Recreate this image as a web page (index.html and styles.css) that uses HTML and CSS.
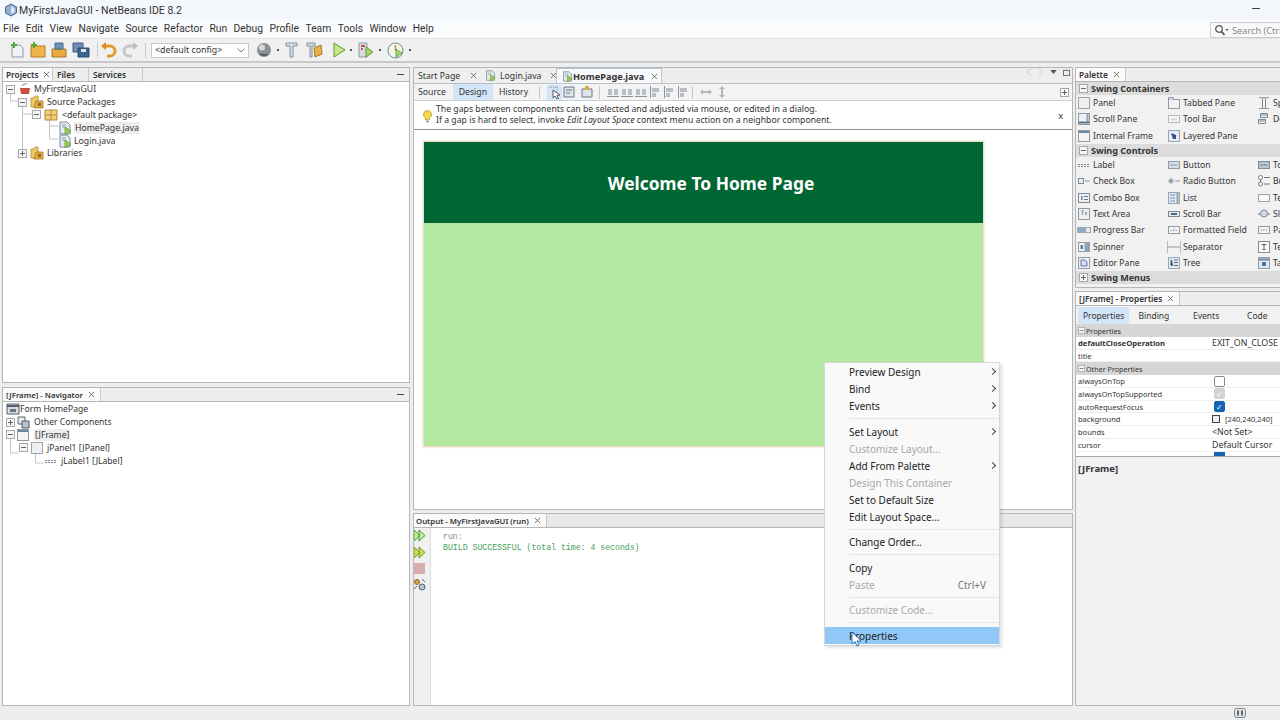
FILE: index.html
```html
<!DOCTYPE html>
<html>
<head>
  <meta charset="utf-8">
  <title>MyFirstJavaGUI - NetBeans IDE 8.2</title>
  <link rel="stylesheet" href="styles.css">
</head>
<body>
  <svg class="defs" width="0" height="0">
    <symbol id="java" viewBox="0 0 14 14">
      <path d="M2 1h7l3 3v9H2z" fill="#e4ebf0" stroke="#7b8b98"/>
      <path d="M4 4h4M4 6h3" stroke="#8fa3b2"/>
      <path d="M7 6l6 4-6 4z" fill="#9ccc50" stroke="#5f9428" stroke-width=".7"/>
    </symbol>
    <symbol id="folder" viewBox="0 0 14 14">
      <path d="M1 3h3l1-2h3v11H1z" fill="#f0c868" stroke="#b58a30" stroke-width=".8"/>
      <path d="M6 6h7v7H4z" fill="#e2a93c" stroke="#a8782a" stroke-width=".8"/>
      <path d="M8 8h3v3H8z" fill="#8a6a3c"/>
    </symbol>
    <symbol id="plus" viewBox="0 0 9 9">
      <rect x=".5" y=".5" width="8" height="8" fill="#f6f6f6" stroke="#a8a8a8"/>
      <path d="M2 4.500h5M4.500 2v5" stroke="#666"/>
    </symbol>
    <symbol id="minus" viewBox="0 0 9 9">
      <rect x=".5" y=".5" width="8" height="8" fill="#f6f6f6" stroke="#a8a8a8"/>
      <path d="M2 4.500h5" stroke="#666"/>
    </symbol>
    <symbol id="close" viewBox="0 0 8 8">
      <path d="M1 1l6 6M7 1L1 7" stroke="#555" stroke-width=".9" fill="none"/>
    </symbol>
    <symbol id="align-b" viewBox="0 0 12 12">
      <path d="M1 3h4v6H1zM7 3h4v6H7z" fill="#b9bec4"/>
      <path d="M0 10.500h12" stroke="#8d9299"/>
    </symbol>
    <symbol id="align-l" viewBox="0 0 12 12">
      <path d="M3 2h7v4H3zM3 7h4v4H3z" fill="#b9bec4"/>
      <path d="M1.500 0v12" stroke="#8d9299"/>
    </symbol>
    <symbol id="box" viewBox="0 0 14 14">
      <rect x="1" y="1" width="12" height="12" fill="#f0f0f0" stroke="#8f9aa6"/>
      <path d="M1 4h12" stroke="#b6c2cf"/>
      <path d="M3 6h8v5H3z" fill="#dfe7ef"/>
    </symbol>
    <symbol id="p-panel" viewBox="0 0 14 14"><rect x="1.500" y="1.500" width="11" height="11" fill="#efefef" stroke="#9aa4ae"/></symbol>
    <symbol id="p-tab" viewBox="0 0 14 14"><rect x="1.500" y="3.500" width="11" height="9" fill="#f2f2f2" stroke="#8f9aa6"/><path d="M1.500 3.500v-2h5v2" fill="#dfe7ef" stroke="#8f9aa6"/></symbol>
    <symbol id="p-split" viewBox="0 0 14 14"><path d="M2 1.500h10M2 12.500h10" stroke="#8f9aa6"/><path d="M5.500 2v10M8.500 2v10" stroke="#7c8b98"/></symbol>
    <symbol id="p-scroll" viewBox="0 0 14 14"><rect x="1.500" y="1.500" width="11" height="11" fill="#f2f2f2" stroke="#8f9aa6"/><path d="M2 10.500h10" stroke="#5e7286" stroke-width="2"/><path d="M10.500 2v8" stroke="#8fa3b5" stroke-width="2"/></symbol>
    <symbol id="p-tool" viewBox="0 0 14 14"><rect x="1.500" y="3.500" width="11" height="7" fill="#f6f6f6" stroke="#b2bac2"/><path d="M4 6.500h6v2H4z" fill="#cdd6de"/></symbol>
    <symbol id="p-desk" viewBox="0 0 14 14"><path d="M3.500 1.500h7v4h-7zM1.500 7.500h7v4h-7z" fill="#f4f4f4" stroke="#7c8b98"/><path d="M3.500 3h7M1.500 9h7" stroke="#7c8b98"/></symbol>
    <symbol id="p-int" viewBox="0 0 14 14"><rect x="1.500" y="1.500" width="11" height="11" fill="#f4f4f4" stroke="#8f9aa6"/><path d="M2 3h10" stroke="#6d87a3" stroke-width="2"/></symbol>
    <symbol id="p-layer" viewBox="0 0 14 14"><rect x="1.500" y="1.500" width="11" height="11" fill="#e6ecf3" stroke="#9aa4ae"/><path d="M4 4l5 2v4H6z" fill="#3a4a94"/></symbol>
    <symbol id="p-label" viewBox="0 0 14 14"><path d="M1 6.500h12M1 8.500h12" stroke="#808890" stroke-dasharray="2 1"/></symbol>
    <symbol id="p-btn" viewBox="0 0 14 14"><rect x="1.500" y="3.500" width="11" height="7" fill="#d8dfe6" stroke="#8f9aa6"/><path d="M3.500 7h7" stroke="#6f7a85" stroke-dasharray="2 1"/></symbol>
    <symbol id="p-toggle" viewBox="0 0 14 14"><rect x="1.500" y="3.500" width="11" height="7" fill="#b9c7d3" stroke="#7c8b98"/><path d="M3.500 7h7" stroke="#5c6670" stroke-dasharray="2 1"/></symbol>
    <symbol id="p-check" viewBox="0 0 14 14"><rect x="1.500" y="4.500" width="5" height="5" fill="#eee" stroke="#7c8b98"/><path d="M8 7h5" stroke="#8f9aa6"/></symbol>
    <symbol id="p-radio" viewBox="0 0 14 14"><circle cx="4" cy="7" r="2.300" fill="#8f9aa6" stroke="#c0c6cc"/><path d="M8 7h5" stroke="#8f9aa6"/></symbol>
    <symbol id="p-group" viewBox="0 0 14 14"><circle cx="3.500" cy="3.500" r="2" fill="#fff" stroke="#6f7a85"/><circle cx="3.500" cy="10" r="2" fill="#fff" stroke="#6f7a85"/><path d="M3.500 5.500v2.500M7 3.500h6M7 10h6" stroke="#6f7a85"/></symbol>
    <symbol id="p-combo" viewBox="0 0 14 14"><rect x="1.500" y="2.500" width="11" height="9" fill="#eef2f6" stroke="#7c8b98"/><path d="M4 5h1.500v4H4z" fill="#6d87a3"/><path d="M7 5.500h4M7 8.500h4" stroke="#5c7996"/></symbol>
    <symbol id="p-list" viewBox="0 0 14 14"><rect x="1.500" y="1.500" width="11" height="11" fill="#dfe8f0" stroke="#9aa9b6"/><path d="M3 4h5M3 7h5M3 10h5" stroke="#8098ad"/><path d="M10.500 2v10" stroke="#8fa3b5" stroke-width="2"/></symbol>
    <symbol id="p-field" viewBox="0 0 14 14"><rect x="1.500" y="3.500" width="11" height="7" fill="#f8f8f8" stroke="#9aa4ae"/></symbol>
    <symbol id="p-area" viewBox="0 0 14 14"><rect x="1.500" y="1.500" width="11" height="11" fill="#eeeeee" stroke="#8f9aa6"/><path d="M4 4h3M5.500 4v4M8 5l2 3M10 5L8 8" stroke="#7c8b98" stroke-width=".8"/></symbol>
    <symbol id="p-sbar" viewBox="0 0 14 14"><rect x="1.500" y="4.500" width="11" height="5" fill="#e4ebf2" stroke="#7c8b98"/><path d="M4 7h6" stroke="#4f6b88" stroke-width="2"/></symbol>
    <symbol id="p-slider" viewBox="0 0 14 14"><path d="M1 7h12" stroke="#a4aeb8" stroke-width="2"/><circle cx="7" cy="6.500" r="3.500" fill="#d3dce5" stroke="#7c8b98"/></symbol>
    <symbol id="p-progress" viewBox="0 0 14 14"><rect x=".5" y="4.500" width="13" height="5" fill="#e6eaee" stroke="#9aa9b6"/><path d="M1 7h8" stroke="#8fa8c2" stroke-width="4"/></symbol>
    <symbol id="p-format" viewBox="0 0 14 14"><rect x="1.500" y="3.500" width="11" height="7" fill="#f4f4f4" stroke="#8f9aa6"/><path d="M3.500 7.500h1.500M6 8.500l1.500-3M8.500 7.500H10" stroke="#7c8b98" stroke-width=".8"/></symbol>
    <symbol id="p-pass" viewBox="0 0 14 14"><rect x="1.500" y="3.500" width="11" height="7" fill="#f4f4f4" stroke="#8f9aa6"/><path d="M3.500 7h7" stroke="#7c8b98" stroke-dasharray="1.500 1"/></symbol>
    <symbol id="p-spin" viewBox="0 0 14 14"><rect x="1.500" y="2.500" width="11" height="9" fill="#f4f4f4" stroke="#8f9aa6"/><path d="M7.500 3h4.500v8H7.500z" fill="#8fa3b5"/><path d="M3.500 5h2.500v4H3.500z" fill="#5c7996"/></symbol>
    <symbol id="p-sep" viewBox="0 0 14 14"><path d="M.5 1v12M13.500 1v12" stroke="#b2bac2"/><path d="M.5 7h13" stroke="#8f9aa6"/></symbol>
    <symbol id="p-tpane" viewBox="0 0 14 14"><rect x="1.500" y="1.500" width="11" height="11" fill="#f8f8f8" stroke="#7c8b98"/><path d="M4.500 4.500h5M7 4.500v5M5.500 9.500h3" stroke="#56626c"/></symbol>
    <symbol id="p-edit" viewBox="0 0 14 14"><rect x="1.500" y="1.500" width="11" height="11" fill="#eef0f4" stroke="#8f9aa6"/><path d="M4 4h4l2 2v4H4z" fill="#d8dcf0" stroke="#4a5aa0" stroke-width=".8"/></symbol>
    <symbol id="p-tree" viewBox="0 0 14 14"><rect x="1.500" y="1.500" width="11" height="11" fill="#e2eaf1" stroke="#9aa9b6"/><path d="M4 3.500v6h2M4 6h2M7 4h4M7 6.500h4M7 9.500h4" stroke="#5e7286"/></symbol>
    <symbol id="p-table" viewBox="0 0 14 14"><rect x="1.500" y="1.500" width="11" height="11" fill="#dde7f0" stroke="#8f9aa6"/><path d="M2 3.500h10" stroke="#6d87a3" stroke-width="2"/><path d="M5 6h4v4H5z" fill="#4f75a0"/></symbol>
  </svg>

  <div class="titlebar">
    <svg class="title-logo" width="14" height="14" viewBox="0 0 14 14">
      <path d="M7 1l5.500 3v6L7 13l-5.500-3V4z" fill="#8fb0d0" stroke="#46688c"/>
      <path d="M7 3l3.500 2v4L7 11z" fill="#dfe9f3"/>
    </svg>
    <span class="title-text">MyFirstJavaGUI - NetBeans IDE 8.2</span>
    <span class="minimize"></span>
  </div>

  <div class="menubar">
    <nav class="menus">
      <span>File</span><span>Edit</span><span>View</span><span>Navigate</span><span>Source</span><span>Refactor</span><span>Run</span><span>Debug</span><span>Profile</span><span>Team</span><span>Tools</span><span>Window</span><span>Help</span>
    </nav>
    <div class="search">
      <svg width="15" height="12" viewBox="0 0 15 12">
        <circle cx="5" cy="5" r="3.300" fill="#fff" stroke="#555" stroke-width="1.300"/>
        <path d="M7.500 7.500l3 3.500" stroke="#444" stroke-width="1.600"/>
        <path d="M11.500 5h3l-1.500 2z" fill="#444"/>
      </svg>
      <span>Search (Ctrl+I)</span>
    </div>
  </div>

  <div class="toolbar">
    <svg class="tool" width="16" height="16" viewBox="0 0 16 16"><path d="M3 3h8l3 3v9H3z" fill="#eef3f7" stroke="#8a98a5"/><path d="M5 0v6M2 3h6" stroke="#4ea83c" stroke-width="2"/></svg>
    <svg class="tool" width="16" height="16" viewBox="0 0 16 16"><path d="M1 4h14v11H1z" fill="#efb548" stroke="#b07c22"/><path d="M4 0v6M1 3h6" stroke="#4ea83c" stroke-width="2"/></svg>
    <svg class="tool" width="16" height="16" viewBox="0 0 16 16"><path d="M1 7h14v8H1z" fill="#e9a93e" stroke="#a8782a"/><path d="M4 1h8v6H4z" fill="#6c8fb5" stroke="#466a90"/></svg>
    <svg class="tool" width="18" height="16" viewBox="0 0 18 16"><path d="M1 1h10v9H1z" fill="#6d8fb3" stroke="#3e5f82"/><path d="M6 6h11v9H6z" fill="#3f648c" stroke="#2d4a6b"/><path d="M9 7h5v3H9z" fill="#d9e4ee"/></svg>
    <i class="tool-sep"></i>
    <svg class="tool" width="16" height="16" viewBox="0 0 16 16"><path d="M3 4h6a5 5 0 0 1 0 10H6" fill="none" stroke="#e09a2c" stroke-width="3"/><path d="M5 0L0 4l5 4z" fill="#d88a20"/></svg>
    <svg class="tool" width="16" height="16" viewBox="0 0 16 16"><path d="M13 4H7a5 5 0 0 0 0 10h3" fill="none" stroke="#c2c8cc" stroke-width="3"/><path d="M11 0l5 4-5 4z" fill="#b9bfc4"/></svg>
    <i class="tool-sep"></i>
    <div class="config"><span>&lt;default config&gt;</span><svg width="8" height="5" viewBox="0 0 8 5"><path d="M.5.500L4 4 7.500.500" fill="none" stroke="#777"/></svg></div>
    <svg class="tool globe" width="16" height="16" viewBox="0 0 16 16"><circle cx="8" cy="8" r="7" fill="#8b8f92"/><circle cx="6" cy="5.500" r="3" fill="#d8dadc"/><path d="M3 12a7 7 0 0 0 10 0z" fill="#55595c"/></svg>
    <i class="tool-dot"></i>
    <svg class="tool" width="13" height="16" viewBox="0 0 13 16"><path d="M1 1h11v3H8v11H5V4H1z" fill="#d6dde2" stroke="#84929c"/></svg>
    <svg class="tool clean" width="17" height="16" viewBox="0 0 17 16"><path d="M1 1h8v3H6v11H4V4H1z" fill="#d6dde2" stroke="#84929c"/><path d="M8 6l7-3 1 9-7 3z" fill="#e8b04a" stroke="#a8782a"/></svg>
    <svg class="tool run" width="13" height="16" viewBox="0 0 13 16"><path d="M1 1l11 7-11 7z" fill="#c8e58e" stroke="#5c9c2a"/></svg>
    <i class="tool-dot"></i>
    <svg class="tool" width="16" height="16" viewBox="0 0 16 16"><path d="M1 1h8v14H1z" fill="#d8dfe4" stroke="#8d9aa4"/><path d="M3 4h4M3 7h2" stroke="#c8574a" stroke-width="2"/><path d="M8 5l7 5-7 5z" fill="#a8d66e" stroke="#5c9c2a"/></svg>
    <i class="tool-dot"></i>
    <svg class="tool" width="17" height="17" viewBox="0 0 17 17"><circle cx="8.500" cy="8.500" r="7.500" fill="#f2f5f0" stroke="#6c8c7c"/><path d="M8.500 3v6" stroke="#d08a30" stroke-width="1.500"/><path d="M9 7l6 4-6 4z" fill="#a8d66e" stroke="#5c9c2a" stroke-width=".8"/></svg>
    <i class="tool-dot"></i>
  </div>

  <div class="workspace">
    <div class="col-left">
      <section class="panel projects">
        <header class="tabs">
          <span class="tab active">Projects <svg class="x"><use href="#close"/></svg></span>
          <span class="tab">Files</span>
          <span class="tab">Services</span>
          <span class="panel-min"></span>
        </header>
        <div class="tree-wrap">
          <svg class="tree-lines" width="80" height="80"><path d="M7.500 10v9h8M19.500 24v47h-4M19.500 32h10M46.500 37v20h9M46.500 44h9" fill="none" stroke="#c4c4c4"/></svg>
          <ul class="tree">
            <li class="lv0"><svg class="exp"><use href="#minus"/></svg><svg class="ico" viewBox="0 0 14 14"><path d="M2 6h10l-1 6H3z" fill="#c8503c"/><path d="M4 4c1-3 4-1 5-3" fill="none" stroke="#8a6a50"/></svg>MyFirstJavaGUI</li>
            <li class="lv1"><svg class="exp"><use href="#minus"/></svg><svg class="ico"><use href="#folder"/></svg>Source Packages</li>
            <li class="lv2"><svg class="exp"><use href="#minus"/></svg><svg class="ico" viewBox="0 0 14 14"><path d="M1 2h12v10H1z" fill="#f3d27c" stroke="#b58a30"/><path d="M7 2v10M1 7h12" stroke="#b58a30"/></svg>&lt;default package&gt;</li>
            <li class="lv3"><svg class="ico"><use href="#java"/></svg><span class="selected">HomePage.java</span></li>
            <li class="lv3"><svg class="ico"><use href="#java"/></svg>Login.java</li>
            <li class="lv1"><svg class="exp"><use href="#plus"/></svg><svg class="ico"><use href="#folder"/></svg>Libraries</li>
          </ul>
        </div>
      </section>
      <section class="panel navigator">
        <header class="tabs">
          <span class="tab active">[JFrame] - Navigator <svg class="x"><use href="#close"/></svg></span>
          <span class="panel-min"></span>
        </header>
        <div class="tree-wrap">
          <svg class="tree-lines" width="80" height="80"><path d="M7.500 36v15h8M32.500 48v13h8" fill="none" stroke="#c4c4c4"/></svg>
          <ul class="tree">
            <li class="nav0"><svg class="ico" viewBox="0 0 14 14"><path d="M1 2h12v10H1z" fill="#d8dce0" stroke="#55606a"/><path d="M1 4h12" stroke="#55606a" stroke-width="2"/><path d="M4 7h6v3H4z" fill="#6b7782"/></svg>Form HomePage</li>
            <li class="nav0b"><svg class="exp"><use href="#plus"/></svg><svg class="ico" viewBox="0 0 14 14"><path d="M2 2h7v7H2z" fill="#e8ecef" stroke="#5c6670"/><path d="M6 6h7v7H6z" fill="#b8c6d2" stroke="#4c5862"/></svg>Other Components</li>
            <li class="nav0b"><svg class="exp"><use href="#minus"/></svg><svg class="ico"><use href="#p-int"/></svg><span class="selected">[JFrame]</span></li>
            <li class="nav1"><svg class="exp"><use href="#minus"/></svg><svg class="ico"><use href="#p-panel"/></svg>jPanel1 [JPanel]</li>
            <li class="nav2"><svg class="ico"><use href="#p-label"/></svg>jLabel1 [JLabel]</li>
          </ul>
        </div>
      </section>
    </div>

    <div class="col-center">
      <section class="panel editor">
        <header class="editor-tabs">
          <span class="etab">Start Page <svg class="x"><use href="#close"/></svg></span>
          <span class="etab"><svg class="ico"><use href="#java"/></svg>Login.java <svg class="x"><use href="#close"/></svg></span>
          <span class="etab current"><svg class="ico"><use href="#java"/></svg>HomePage.java <svg class="x"><use href="#close"/></svg></span>
          <span class="etab-controls">
            <svg width="6" height="8" viewBox="0 0 6 8"><path d="M5 .500L1 4l4 3.500" fill="none" stroke="#c4c8cc"/></svg>
            <svg width="6" height="8" viewBox="0 0 6 8"><path d="M1 .500L5 4 1 7.500" fill="none" stroke="#c4c8cc"/></svg>
            <svg width="7" height="4" viewBox="0 0 8 5"><path d="M0 0h8L4 5z" fill="#555"/></svg>
            <svg width="7" height="7" viewBox="0 0 8 8"><path d="M.5 1.500h7v6h-7z" fill="none" stroke="#555"/></svg>
          </span>
        </header>
        <div class="design-bar">
          <span class="view">Source</span>
          <span class="view active">Design</span>
          <span class="view">History</span>
          <i class="bar-sep"></i>
          <span class="pick"><svg width="13" height="13" viewBox="0 0 13 13"><path d="M1 1h8v6" fill="none" stroke="#7b8793" stroke-dasharray="1 1"/><path d="M5 4l7 5-3 .5 1.500 3-1.500.5L7 10l-2 2z" fill="#fff" stroke="#556"/></svg></span>
          <svg class="dbi" width="12" height="12" viewBox="0 0 12 12"><path d="M1 1h10v10H1z" fill="#dfe5ea" stroke="#6c7883"/><path d="M3 4h6M3 7h4" stroke="#6c7883"/></svg>
          <svg class="dbi wide" width="12" height="12" viewBox="0 0 12 12"><path d="M1 3h10v8H1z" fill="#dfe5ea" stroke="#6c7883"/><path d="M4 0h4v4H4z" fill="#e0a83c"/></svg>
          <i class="bar-sep"></i>
          <svg class="al"><use href="#align-b"/></svg><svg class="al"><use href="#align-b"/></svg><svg class="al"><use href="#align-b"/></svg><svg class="al"><use href="#align-l"/></svg><svg class="al"><use href="#align-l"/></svg><svg class="al"><use href="#align-l"/></svg>
          <i class="bar-sep near"></i>
          <svg class="dbi" width="12" height="10" viewBox="0 0 12 10"><path d="M0 5l3-3v6zM12 5L9 2v6zM3 4h6v2H3z" fill="#b4b9be"/></svg>
          <svg class="dbi up" width="8" height="12" viewBox="0 0 8 12"><path d="M4 0l3 3H1zM4 12l3-3H1zM3 3h2v6H3z" fill="#b4b9be"/></svg>
          <svg class="grow-icon" width="9" height="9"><use href="#plus"/></svg>
        </div>
        <div class="hint">
          <svg class="bulb" width="9" height="13" viewBox="0 0 9 13"><path d="M4.500.500a4 4 0 0 1 2 7.500v2h-4V8a4 4 0 0 1 2-7.500z" fill="#f3d84e" stroke="#a89030" stroke-width=".7"/><path d="M3 11h3l-1 1.500H4z" fill="#777"/></svg>
          <p>The gaps between components can be selected and adjusted via mouse, or edited in a dialog.<br>If a gap is hard to select, invoke <em>Edit Layout Space</em> context menu action on a neighbor component.</p>
          <span class="hint-x">x</span>
        </div>
        <div class="canvas">
          <div class="form">
            <div class="form-head">Welcome To Home Page</div>
            <div class="form-body"></div>
          </div>
        </div>
      </section>
      <section class="panel output">
        <header class="tabs">
          <span class="tab active">Output - MyFirstJavaGUI (run) <svg class="x"><use href="#close"/></svg></span>
        </header>
        <div class="output-body">
          <div class="output-tools">
            <svg width="13" height="13" viewBox="0 0 13 13"><path d="M1 1l6 5.500L1 12zM6 1l6 5.500L6 12z" fill="#c4f0a0" stroke="#3f9a2c"/></svg>
            <svg width="13" height="13" viewBox="0 0 13 13"><path d="M1 1l6 5.500L1 12zM6 1l6 5.500L6 12z" fill="#c8e04a" stroke="#6f9a2c"/></svg>
            <svg width="11" height="11" viewBox="0 0 11 11"><rect width="11" height="11" fill="#d8aeb0"/></svg>
            <svg width="13" height="13" viewBox="0 0 13 13"><circle cx="4" cy="4" r="2.500" fill="#d9a050" stroke="#8a6a3c"/><circle cx="9" cy="9" r="3" fill="#b8c4ce" stroke="#56626c"/><path d="M1 11l3-3M9 1l3 3" stroke="#56626c"/></svg>
          </div>
          <pre class="log"><span class="log-run">run:</span>
<span class="log-ok">BUILD SUCCESSFUL (total time: 4 seconds)</span></pre>
        </div>
      </section>
    </div>

    <div class="col-right">
      <section class="panel palette">
        <header class="tabs">
          <span class="tab active">Palette <svg class="x"><use href="#close"/></svg></span>
        </header>
        <div class="pal-head"><svg class="exp"><use href="#minus"/></svg>Swing Containers</div>
        <div class="pal-grid">
          <span><svg class="ico"><use href="#p-panel"/></svg>Panel</span><span><svg class="ico"><use href="#p-tab"/></svg>Tabbed Pane</span><span><svg class="ico"><use href="#p-split"/></svg>Split Pane</span>
          <span><svg class="ico"><use href="#p-scroll"/></svg>Scroll Pane</span><span><svg class="ico"><use href="#p-tool"/></svg>Tool Bar</span><span><svg class="ico"><use href="#p-desk"/></svg>Desktop Pane</span>
          <span><svg class="ico"><use href="#p-int"/></svg>Internal Frame</span><span><svg class="ico"><use href="#p-layer"/></svg>Layered Pane</span><span></span>
        </div>
        <div class="pal-head"><svg class="exp"><use href="#minus"/></svg>Swing Controls</div>
        <div class="pal-grid">
          <span><svg class="ico"><use href="#p-label"/></svg>Label</span><span><svg class="ico"><use href="#p-btn"/></svg>Button</span><span><svg class="ico"><use href="#p-toggle"/></svg>Toggle Button</span>
          <span><svg class="ico"><use href="#p-check"/></svg>Check Box</span><span><svg class="ico"><use href="#p-radio"/></svg>Radio Button</span><span><svg class="ico"><use href="#p-group"/></svg>Button Group</span>
          <span><svg class="ico"><use href="#p-combo"/></svg>Combo Box</span><span><svg class="ico"><use href="#p-list"/></svg>List</span><span><svg class="ico"><use href="#p-field"/></svg>Text Field</span>
          <span><svg class="ico"><use href="#p-area"/></svg>Text Area</span><span><svg class="ico"><use href="#p-sbar"/></svg>Scroll Bar</span><span><svg class="ico"><use href="#p-slider"/></svg>Slider</span>
          <span><svg class="ico"><use href="#p-progress"/></svg>Progress Bar</span><span><svg class="ico"><use href="#p-format"/></svg>Formatted Field</span><span><svg class="ico"><use href="#p-pass"/></svg>Password Field</span>
          <span><svg class="ico"><use href="#p-spin"/></svg>Spinner</span><span><svg class="ico"><use href="#p-sep"/></svg>Separator</span><span><svg class="ico"><use href="#p-tpane"/></svg>Text Pane</span>
          <span><svg class="ico"><use href="#p-edit"/></svg>Editor Pane</span><span><svg class="ico"><use href="#p-tree"/></svg>Tree</span><span><svg class="ico"><use href="#p-table"/></svg>Table</span>
        </div>
        <div class="pal-head"><svg class="exp"><use href="#plus"/></svg>Swing Menus</div>
      </section>
      <section class="panel props">
        <header class="tabs">
          <span class="tab active">[JFrame] - Properties <svg class="x"><use href="#close"/></svg></span>
        </header>
        <div class="prop-tabs">
          <span class="ptab active">Properties</span>
          <span class="ptab">Binding</span>
          <span class="ptab">Events</span>
          <span class="ptab">Code</span>
        </div>
        <div class="prop-table">
          <div class="prop-sec"><svg class="exp"><use href="#minus"/></svg>Properties</div>
          <div class="prop-row"><b>defaultCloseOperation</b><span class="val">EXIT_ON_CLOSE</span></div>
          <div class="prop-row"><span>title</span><span class="val"></span></div>
          <div class="prop-sec"><svg class="exp"><use href="#minus"/></svg>Other Properties</div>
          <div class="prop-row"><span>alwaysOnTop</span><span class="val"><i class="check"></i></span></div>
          <div class="prop-row"><span>alwaysOnTopSupported</span><span class="val"><i class="check off">&#10003;</i></span></div>
          <div class="prop-row"><span>autoRequestFocus</span><span class="val"><i class="check on">&#10003;</i></span></div>
          <div class="prop-row"><span>background</span><span class="val small"><i class="swatch"></i>[240,240,240]</span></div>
          <div class="prop-row"><span>bounds</span><span class="val">&lt;Not Set&gt;</span></div>
          <div class="prop-row"><span>cursor</span><span class="val">Default Cursor</span></div>
          <div class="prop-row cut"><span></span><span class="val"><i class="check on"></i></span></div>
        </div>
        <div class="prop-desc">[JFrame]</div>
      </section>
    </div>
  </div>

  <div class="statusbar">
    <svg width="12" height="10" viewBox="0 0 12 10"><rect x=".5" y=".5" width="11" height="9" rx="2" fill="#dfe3e6" stroke="#7f878e"/><path d="M4 2.500v5M8 2.500v5" stroke="#444" stroke-width="1.500"/></svg>
  </div>

  <div class="context-menu">
    <div class="mi sub">Preview Design</div>
    <div class="mi sub">Bind</div>
    <div class="mi sub">Events</div>
    <hr>
    <div class="mi sub">Set Layout</div>
    <div class="mi off">Customize Layout...</div>
    <div class="mi sub">Add From Palette</div>
    <div class="mi off">Design This Container</div>
    <div class="mi">Set to Default Size</div>
    <div class="mi">Edit Layout Space...</div>
    <hr class="tight">
    <div class="mi">Change Order...</div>
    <hr>
    <div class="mi">Copy</div>
    <div class="mi off keyed">Paste<span>Ctrl+V</span></div>
    <hr class="tight">
    <div class="mi off">Customize Code...</div>
    <hr>
    <div class="mi hot">Properties</div>
    <svg class="pointer" width="12" height="16" viewBox="0 0 12 16"><path d="M1 1v12l3-2.500 2 4.500 2-1-2-4h4z" fill="#fff" stroke="#2f6fb0"/></svg>
  </div>
</body>
</html>
```

FILE: styles.css
```css
* { box-sizing: border-box; }
html, body {
  margin: 0;
  padding: 0;
  width: 1280px;
  height: 720px;
  overflow: hidden;
}
body {
  position: relative;
  background: #eeeeee;
  color: #333;
  font-family: "Noto Sans", "Liberation Sans", sans-serif;
  font-size: 9px;
}
.defs { position: absolute; }
svg { display: block; flex: none; }
ul { list-style: none; margin: 0; padding: 0; }

.titlebar {
  display: flex;
  align-items: center;
  height: 20px;
  padding-left: 4px;
  background: #f4f7fb;
}
.title-text { margin-left: 1px; font-family: Roboto, sans-serif; font-size: 10.500px; color: #333; }
.minimize {
  width: 8px;
  height: 1px;
  margin-left: auto;
  margin-right: 20px;
  margin-bottom: 3px;
  background: #444;
}

.menubar {
  display: flex;
  align-items: center;
  justify-content: space-between;
  height: 18px;
  background: #fafbfd;
}
.menus {
  display: flex;
  gap: 6.500px;
  padding: 0 0 2px 3px;
  font-family: Roboto, sans-serif;
  font-size: 10.300px;
}
.search {
  display: flex;
  align-items: center;
  gap: 3px;
  width: 70px;
  height: 16px;
  padding-left: 3px;
  margin-top: 2px;
  white-space: nowrap;
  overflow: hidden;
  background: #f9f9f9;
  border: 1px solid #ccc;
  border-right: 0;
  color: #888;
  font-size: 9.200px;
}

.toolbar {
  display: flex;
  align-items: center;
  height: 25px;
  padding: 0 0 0 9px;
  background: #f0f0f0;
  border-top: 1px solid #e4e4e4;
  border-bottom: 2px solid #c9c9c9;
}
.tool { margin-right: 5px; }
.tool-sep {
  width: 1px;
  height: 15px;
  margin: 0 3px 0 2px;
  border-left: 1px dotted #aaa;
}
.tool-dot {
  width: 2px;
  height: 2px;
  margin: 0 6px 0 0;
  background: #555;
}
.config {
  display: flex;
  align-items: center;
  justify-content: space-between;
  width: 98px;
  height: 15px;
  padding: 0 3px;
  margin: 0 7px 0 2px;
  background: #fff;
  border: 1px solid #c8c8c8;
  font-size: 8.800px;
}
.clean { margin: 0 10px 0 3px; }
.run { margin-right: 4px; }

.workspace {
  display: grid;
  grid-template-columns: 413px 662px 205px;
  height: 643px;
  padding-top: 4px;
}
.col-left, .col-center, .col-right {
  display: flex;
  flex-direction: column;
  gap: 4px;
  min-width: 0;
}
.col-left { padding: 0 3px 0 2px; }
.col-center { padding-right: 2px; gap: 3px; }
.col-right { gap: 3px; }

.panel {
  display: flex;
  flex-direction: column;
  min-height: 0;
  overflow: hidden;
  background: #fff;
  border: 1px solid #b6b6b6;
}
.col-right .panel { border-right: 0; background: #f1f1f1; }
.projects { height: 316px; }
.navigator { flex: 1; }
.editor { height: 443px; }
.output { flex: 1; }
.palette { height: 221px; }
.props { flex: 1; }

.tabs {
  display: flex;
  align-items: stretch;
  flex: none;
  height: 14px;
  background: #eeeeee;
  border-bottom: 1px solid #b6b6b6;
  font-size: 8.300px;
  font-weight: 600;
}
.tab {
  display: flex;
  align-items: center;
  gap: 5px;
  padding: 0 5px 0 3px;
  border-right: 1px solid #c8c8c8;
  white-space: nowrap;
}
.tab.active { background: #fafafa; }
.projects .tab:nth-child(1) { width: 50px; }
.projects .tab:nth-child(2) { width: 36px; padding-left: 4px; }
.projects .tab:nth-child(3) { width: 54px; padding-left: 4px; }
.navigator .tab, .output .tab { font-size: 7.800px; }
.output .tab { padding-left: 2px; }
.x { width: 7px; height: 7px; }
.panel-min {
  width: 7px;
  height: 1px;
  align-self: center;
  margin-left: auto;
  margin-right: 5px;
  background: #444;
}

.tree-wrap { position: relative; flex: 1; }
.tree-lines { position: absolute; left: 0; top: 0; }
.tree { position: relative; padding-top: 1px; font-size: 8.700px; }
.navigator .tree { font-size: 8.600px; }
.tree li {
  display: flex;
  align-items: center;
  height: 12.800px;
  white-space: nowrap;
}
.exp { width: 9px; height: 9px; }
.ico { width: 14px; height: 14px; margin-right: 3px; }
.lv0 { padding-left: 3px; }
.lv0 .ico { margin: 0 2px 0 3px; }
.lv1 { padding-left: 15px; }
.lv1 .ico { margin: 0 3px 0 3px; }
.lv2 { padding-left: 29px; }
.lv2 .ico { margin: 0 4px 0 3px; }
.lv3 { padding-left: 55px; }
.lv3 .ico { margin-right: 2px; }
.selected { background: #eeeeee; padding: 0 1px; }
.nav0 { padding-left: 3px; }
.nav0 .ico { margin-right: 0; }
.nav0b { padding-left: 3px; }
.nav0b .ico { margin: 0 4px 0 1px; }
.nav1 { padding-left: 16px; }
.nav1 .ico { margin: 0 3px 0 2px; }
.nav2 { padding-left: 41px; }
.nav2 .ico { margin-right: 3px; }

.editor-tabs {
  display: flex;
  align-items: flex-end;
  flex: none;
  height: 16px;
  background: #eeeeee;
  border-bottom: 1px solid #b6c2cc;
  font-size: 8.700px;
}
.etab {
  display: flex;
  align-items: center;
  height: 15px;
  padding: 0 5px;
  white-space: nowrap;
}
.etab .ico { width: 11px; height: 11px; }
.etab:first-child { width: 66px; padding-left: 4px; gap: 10px; }
.etab:nth-child(2) { width: 76px; gap: 2px; }
.etab:nth-child(2) .ico { margin-right: 2px; }
.etab .x { margin-left: 6px; }
.etab:first-child .x { margin-left: 0; }
.etab.current {
  width: 106px;
  padding-left: 5px;
  background: #f7f9fb;
  border: 1px solid #b6c6d4;
  border-bottom: 0;
  font-size: 9.200px;
  font-weight: 700;
}
.etab.current .ico { margin-right: 0; }
.etab.current .x { margin-left: 7px; }
.etab-controls {
  display: flex;
  align-items: center;
  align-self: flex-start;
  gap: 6px;
  height: 8px;
  margin-left: auto;
  padding-right: 2px;
}

.design-bar {
  display: flex;
  align-items: center;
  flex: none;
  height: 17px;
  padding-left: 4px;
  background: #f3f3f3;
  border-bottom: 1px solid #c4d0d8;
  font-size: 8.700px;
}
.view {
  display: flex;
  align-items: center;
  height: 100%;
  padding: 0 5px 0 6px;
}
.view:first-child { padding: 0; margin-right: 7px; }
.view.active { width: 40px; justify-content: center; padding: 0; background: #d3e6f7; }
.bar-sep {
  width: 1px;
  height: 13px;
  margin: 0 7px 0 6px;
  background: #c6c6c6;
}
.bar-sep.near { margin: 0 7px 0 1px; }
.pick {
  display: flex;
  align-items: center;
  justify-content: center;
  width: 15px;
  height: 15px;
  background: #d3e6f7;
  margin-right: 1px;
}
.dbi { margin-right: 6px; }
.dbi.wide { margin-right: 0; }
.dbi.up { margin-right: 0; }
.al { width: 12px; height: 12px; margin-right: 2px; }
.grow-icon { margin-left: auto; margin-right: 3px; }

.hint {
  display: flex;
  align-items: center;
  flex: none;
  height: 29px;
  padding-left: 9px;
  background: #fff;
  border-bottom: 1px solid #8f8f8f;
  line-height: 11px;
  font-size: 8.700px;
}
.bulb { margin: 2px 4px 0 0; }
.hint p { margin: 0; white-space: nowrap; }
.hint-x { margin-left: auto; margin-right: 9px; font-size: 9px; }

.canvas { flex: 1; padding: 11px 0 0 9px; background: #fff; }
.form {
  width: 561px;
  height: 306px;
  border: 1px solid #ecdcc8;
  box-shadow: 0 0 2px #d9d0b8;
}
.form-head {
  display: flex;
  align-items: center;
  justify-content: center;
  height: 81px;
  padding: 0 0 0 15px;
  background: #006633;
  color: #fff;
  font-size: 17.400px;
  font-weight: 700;
}
.form-body { height: 223px; background: #b3e8a0; }

.output .tabs { background: #e8e8e8; }
.output-body { display: flex; flex: 1; }
.output-tools {
  display: flex;
  flex-direction: column;
  align-items: center;
  gap: 4px;
  width: 17px;
  padding: 1px 5px 0 0;
  background: #f0f0f0;
  border-right: 1px solid #dcdcdc;
}
.log {
  margin: 0;
  padding: 3px 0 0 12px;
  font-family: "Liberation Mono", monospace;
  font-size: 8.200px;
  line-height: 11px;
}
.log-run { color: #8a8a8a; }
.log-ok { color: #46a05a; }

.pal-head {
  display: flex;
  align-items: center;
  gap: 3px;
  flex: none;
  height: 13px;
  padding-left: 3px;
  background: #dcdcdc;
  font-size: 9px;
  font-weight: 700;
}
.pal-grid {
  display: grid;
  grid-template-columns: 90px 90px 90px;
  grid-auto-rows: 16.300px;
  flex: none;
  padding: 0 0 0 1px;
  font-size: 8.600px;
}
.pal-grid span {
  display: flex;
  align-items: center;
  white-space: nowrap;
}
.pal-grid .ico { margin-right: 2px; }

.prop-tabs {
  display: flex;
  align-items: center;
  flex: none;
  height: 18px;
  padding-left: 2px;
  font-size: 8.500px;
}
.ptab { padding: 3px 0; text-align: center; }
.ptab.active { width: 52px; margin-right: 1px; background: #d3e6f7; border-radius: 2px; }
.ptab:nth-child(2) { width: 48px; }
.ptab:nth-child(3) { width: 58px; }
.ptab:nth-child(4) { width: 46px; }
.prop-table {
  flex: none;
  height: 132px;
  overflow: hidden;
  background: #fff;
  font-size: 7.500px;
}
.prop-sec {
  display: flex;
  align-items: center;
  gap: 1px;
  height: 13px;
  padding-left: 2px;
  background: #d6d6d6;
  font-size: 7.200px;
}
.prop-sec .exp { width: 7px; height: 7px; }
.prop-row {
  display: grid;
  grid-template-columns: 134px 1fr;
  align-items: center;
  height: 12.700px;
  padding-left: 2px;
  border-bottom: 1px solid #efefef;
  white-space: nowrap;
}
.prop-row b { font-size: 7.700px; }
.prop-row .val { display: flex; align-items: center; font-size: 8.800px; overflow: hidden; }
.prop-row .val.small { font-size: 7.500px; }
.check {
  display: block;
  width: 11px;
  height: 11px;
  margin-left: 2px;
  border: 1px solid #8a8a8a;
  border-radius: 2px;
  background: #fff;
  color: #fff;
  font-style: normal;
  font-size: 8px;
  line-height: 9px;
  text-align: center;
}
.check.off { background: #d4d4d4; border-color: #d4d4d4; }
.check.on { background: #1464b4; border-color: #1464b4; }
.swatch {
  display: block;
  width: 8px;
  height: 8px;
  margin: 0 5px 0 0;
  background: #f0f0f0;
  border: 1px solid #444;
}
.cut { height: 6px; overflow: hidden; border: 0; }
.prop-desc {
  flex: 1;
  padding: 5px 2px;
  background: #f1f1f1;
  border-top: 1px solid #a8a8a8;
  font-size: 9.500px;
  font-weight: 700;
}

.statusbar {
  display: flex;
  align-items: center;
  justify-content: flex-end;
  height: 14px;
  padding-right: 34px;
  background: #eeeeee;
}

.context-menu {
  position: absolute;
  left: 824px;
  top: 362px;
  width: 176px;
  height: 284px;
  padding: 0;
  background: #f9f9f9;
  border: 1px solid #d6d6d6;
  box-shadow: 2px 2px 3px rgba(0, 0, 0, .12);
  font-size: 10px;
  color: #222;
}
.mi {
  display: flex;
  align-items: center;
  justify-content: space-between;
  height: 17px;
  padding: 0 13px 0 24px;
  white-space: nowrap;
}
.mi.sub::after {
  content: "";
  width: 4px;
  height: 4px;
  margin-right: -9px;
  border-top: 1px solid #444;
  border-right: 1px solid #444;
  transform: rotate(45deg);
}
.mi.off { color: #a8a8a8; }
.mi.keyed span { color: #777; }
.mi.hot { background: #90c8f8; }
hr {
  height: 1px;
  margin: 4px 0 4px 24px;
  border: 0;
  background: #e6e6e6;
}
hr.tight { margin-bottom: 3px; }
.pointer { position: absolute; left: 26px; top: 268px; }
```
